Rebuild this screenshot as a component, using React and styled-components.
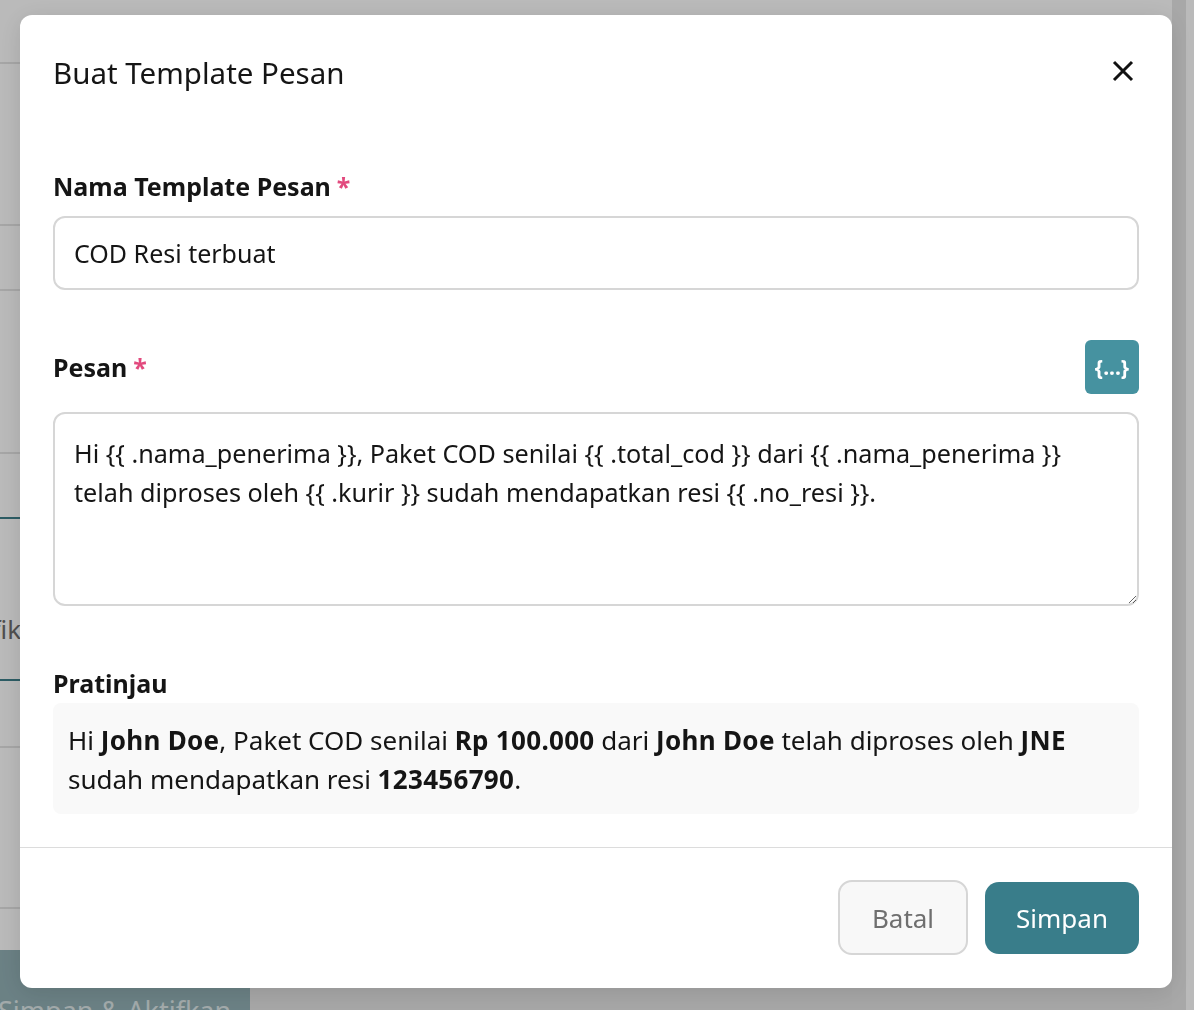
import React from 'react'
import styled, { createGlobalStyle } from 'styled-components'

const GlobalStyle = createGlobalStyle`
  html, body {
    margin: 0;
    padding: 0;
    height: 100%;
    overflow: hidden;
  }
  body {
    background: #ffffff;
    font-family: "Noto Sans", "Lato", sans-serif;
    color: #151515;
  }
`

// page behind the modal
const BackPage = styled.div`
  display: grid;
  grid-template-columns: 1fr 14px 8px;
  height: 100vh;
`
const BackMain = styled.div`
  display: flex;
  flex-direction: column;
  overflow: hidden;
`
const BackRail = styled.div`
  background: ${(p) => p.$tone};
`
const BackRow = styled.div`
  height: ${(p) => p.$h}px;
  flex-shrink: 0;
  border-bottom: 2px solid ${(p) => (p.$teal ? '#3d7f8a' : '#e4e4e4')};
  box-sizing: border-box;
  display: flex;
  align-items: center;
  font-size: 26px;
  color: #6d6d6d;
  white-space: nowrap;
`
const BackText = styled.span`
  margin-left: ${(p) => p.$shift}px;
  margin-top: ${(p) => p.$top || 0}px;
`
const BackFooter = styled.div`
  margin-top: auto;
  height: 60px;
  background: #e5e5e5;
  display: flex;
`
const BackButton = styled.div`
  width: 250px;
  background: #93b1b6;
  color: #dfe9ea;
  font-size: 27px;
  padding-top: 42px;
  box-sizing: border-box;
  white-space: nowrap;
  overflow: hidden;
  text-indent: -2px;
`

const Overlay = styled.div`
  position: fixed;
  inset: 0;
  background: rgba(0, 0, 0, 0.27);
  display: flex;
  align-items: flex-start;
  padding: 15px 0 0 20px;
`
const Modal = styled.div`
  width: 1152px;
  background: #ffffff;
  border-radius: 12px;
  box-shadow: 0 4px 24px rgba(0, 0, 0, 0.12);
  display: flex;
  flex-direction: column;
`
const Header = styled.div`
  display: flex;
  align-items: center;
  justify-content: space-between;
  padding: 40px 38px 0 33px;
`
const Title = styled.h2`
  margin: 0;
  font-size: 29.5px;
  line-height: 36px;
  font-weight: 400;
  color: #151515;
`
const CloseButton = styled.button`
  border: none;
  background: none;
  padding: 0;
  width: 22px;
  height: 22px;
  display: flex;
  cursor: pointer;
  margin-top: -4px;
`
const Body = styled.div`
  display: flex;
  flex-direction: column;
  padding: 0 33px 33px;
`
const LabelRow = styled.div`
  display: flex;
  align-items: center;
  justify-content: space-between;
  margin-top: ${(p) => p.$mt}px;
  margin-bottom: ${(p) => p.$mb}px;
  min-height: ${(p) => p.$minH || 32}px;
`
const Label = styled.label`
  font-size: 25px;
  line-height: 32px;
  font-weight: 700;
  color: #151515;
`
const Required = styled.span`
  color: #e24a7e;
  margin-left: 6px;
`
const TextInput = styled.input`
  box-sizing: border-box;
  width: 100%;
  height: 74px;
  border: 2px solid #d6d6d6;
  border-radius: 12px;
  padding: 0 19px;
  font-family: inherit;
  font-size: 25px;
  color: #151515;
  outline: none;
`
const TextArea = styled.textarea`
  box-sizing: border-box;
  width: 100%;
  height: 194px;
  border: 2px solid #d6d6d6;
  border-radius: 12px;
  padding: 20px 40px 20px 19px;
  font-family: inherit;
  font-size: 25.2px;
  line-height: 39px;
  color: #151515;
  outline: none;
  resize: vertical;
`
const VarButton = styled.button`
  width: 54px;
  height: 54px;
  border: none;
  border-radius: 6px;
  background: #4692a0;
  color: #ffffff;
  font-family: inherit;
  font-size: 21px;
  font-weight: 700;
  padding: 0;
  cursor: pointer;
`
const Preview = styled.div`
  background: #f9f9f9;
  border-radius: 8px;
  padding: 18px 60px 15px 15px;
  font-size: 26px;
  line-height: 39px;
  color: #151515;

  b {
    font-weight: 700;
    letter-spacing: 0.3px;
  }
`
const Divider = styled.div`
  height: 1px;
  background: #dcdcdc;
`
const Footer = styled.div`
  display: flex;
  justify-content: flex-end;
  align-items: center;
  gap: 17px;
  padding: 32px 33px 33px;
`
const ActionButton = styled.button`
  box-sizing: border-box;
  height: ${(p) => (p.$primary ? 72 : 75)}px;
  padding: 0 ${(p) => (p.$primary ? 31 : 32)}px;
  border-radius: 14px;
  border: ${(p) => (p.$primary ? 'none' : '2px solid #d6d6d6')};
  background: ${(p) => (p.$primary ? '#397d8a' : '#f8f8f8')};
  color: ${(p) => (p.$primary ? '#ffffff' : '#6f6f6f')};
  font-family: inherit;
  font-size: 26px;
  cursor: pointer;
`

const template =
  'Hi {{ .nama_penerima }}, Paket COD senilai {{ .total_cod }} dari {{ .nama_penerima }} telah diproses oleh {{ .kurir }} sudah mendapatkan resi {{ .no_resi }}.'

export default function App() {
  return (
    <>
      <GlobalStyle />
      <BackPage>
        <BackMain>
          <BackRow $h={64} />
          <BackRow $h={162} />
          <BackRow $h={65} />
          <BackRow $h={163} />
          <BackRow $h={65} $teal />
          <BackRow $h={162} $teal>
            <BackText $shift={-60} $top={60}>Notifikasi</BackText>
          </BackRow>
          <BackRow $h={67} />
          <BackRow $h={161}>
            <BackText $shift={-82} $top={-60}>Pesan</BackText>
          </BackRow>
          <BackFooter>
            <BackButton>Simpan &amp; Aktifkan</BackButton>
          </BackFooter>
        </BackMain>
        <BackRail $tone="#e7e7e7" />
        <BackRail $tone="#ffffff" />
      </BackPage>

      <Overlay>
        <Modal>
          <Header>
            <Title>Buat Template Pesan</Title>
            <CloseButton aria-label="Tutup">
              <svg width="22" height="22" viewBox="0 0 22 22">
                <path d="M2 2 L20 20 M20 2 L2 20" stroke="#111" strokeWidth="3" />
              </svg>
            </CloseButton>
          </Header>
          <Body>
            <LabelRow $mt={79} $mb={14}>
              <Label>
                Nama Template Pesan<Required>*</Required>
              </Label>
            </LabelRow>
            <TextInput defaultValue="COD Resi terbuat" />

            <LabelRow $mt={50} $mb={18} $minH={54}>
              <Label>
                Pesan<Required>*</Required>
              </Label>
              <VarButton>{'{...}'}</VarButton>
            </LabelRow>
            <TextArea defaultValue={template} />

            <LabelRow $mt={61} $mb={4}>
              <Label>Pratinjau</Label>
            </LabelRow>
            <Preview>
              Hi <b>John Doe</b>, Paket COD senilai <b>Rp 100.000</b> dari{' '}
              <b>John Doe</b> telah diproses oleh <b>JNE</b> sudah mendapatkan
              resi <b>123456790</b>.
            </Preview>
          </Body>
          <Divider />
          <Footer>
            <ActionButton>Batal</ActionButton>
            <ActionButton $primary>Simpan</ActionButton>
          </Footer>
        </Modal>
      </Overlay>
    </>
  )
}
